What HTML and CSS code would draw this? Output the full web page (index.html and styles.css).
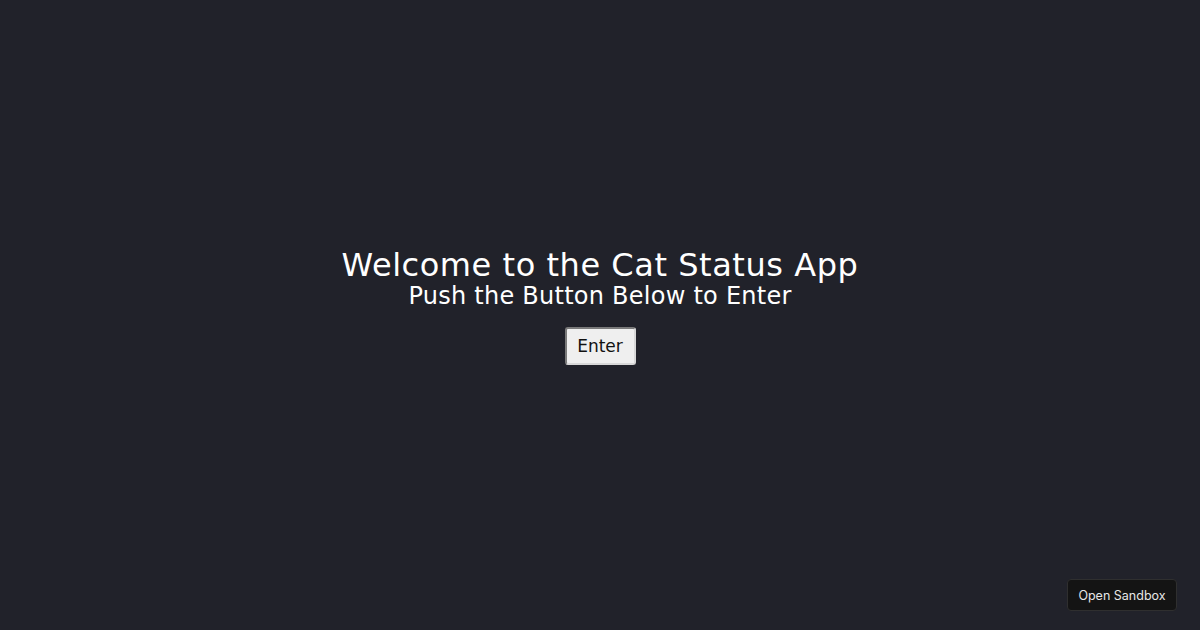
FILE: index.html
```html
<!DOCTYPE html>
<html>
<head>
<meta charset="utf-8">
<link rel="stylesheet" href="styles.css">
</head>
<body>
<main class="welcome">
  <h1 class="title">Welcome to the Cat Status App</h1>
  <h2 class="subtitle">Push the Button Below to Enter</h2>
  <button class="enter-btn">Enter</button>
</main>
<a class="sandbox-btn">Open Sandbox</a>
</body>
</html>
```
FILE: styles.css
```css
html, body {
  margin: 0;
  padding: 0;
  height: 100%;
}
body {
  background: #21222a;
  color: #ffffff;
  font-family: "DejaVu Sans", sans-serif;
  display: flex;
  align-items: center;
  justify-content: center;
}
.welcome {
  display: flex;
  flex-direction: column;
  align-items: center;
  margin-top: -18px;
}
.title {
  margin: 0;
  font-size: 32px;
  font-weight: normal;
  line-height: 36px;
  letter-spacing: 0.55px;
}
.subtitle {
  margin: 0;
  font-size: 24px;
  font-weight: normal;
  line-height: 26px;
  letter-spacing: 0.25px;
}
.enter-btn {
  margin-top: 18px;
  width: 71px;
  height: 38px;
  font-family: "DejaVu Sans", sans-serif;
  font-size: 17px;
  color: #111;
  background: #efefef;
  border: 2px solid;
  border-color: #7a7a7a #d8d8d8 #d8d8d8 #7a7a7a;
  border-radius: 3px;
  padding: 0;
}
.sandbox-btn {
  position: fixed;
  right: 23px;
  bottom: 19px;
  width: 110px;
  height: 32px;
  box-sizing: border-box;
  display: flex;
  align-items: center;
  justify-content: center;
  background: #141414;
  border: 1px solid #2f2f2f;
  border-radius: 4px;
  color: #e6e6e6;
  font-family: Inter, sans-serif;
  font-size: 12.5px;
}
```
